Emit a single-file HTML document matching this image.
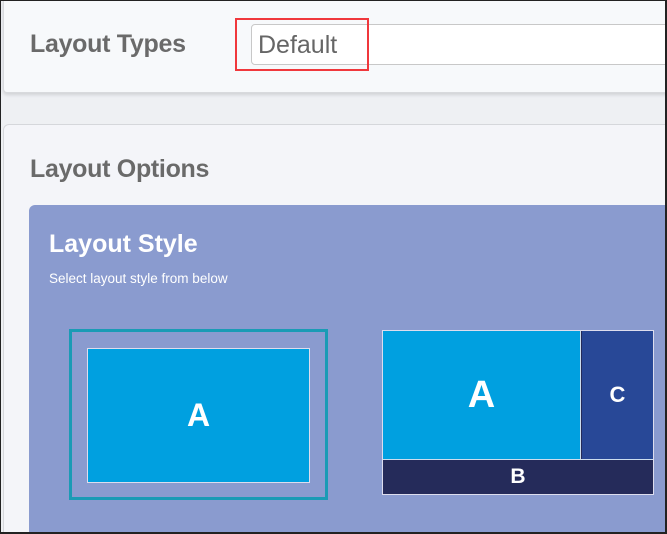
<!DOCTYPE html>
<html><head><style>
*{margin:0;padding:0;box-sizing:border-box}
html,body{width:667px;height:534px;overflow:hidden}
body{background:#eef0f3;font-family:"Liberation Sans",sans-serif;position:relative;}
.abs{position:absolute}
.h{color:#6a6a6a;font-weight:bold;font-size:25px;letter-spacing:-0.3px}
</style></head><body>
<div class="abs" style="left:3px;top:0;width:670px;height:93px;background:#f7f9fb;border:1px solid #d8dadd;border-top:none;border-radius:0 0 4px 4px;box-shadow:0 2px 3px rgba(0,0,0,.12)"></div>
<div class="abs h" style="left:30px;top:30px">Layout Types</div>
<div class="abs" style="left:251px;top:24px;width:420px;height:41px;background:#fff;border:1px solid #c8c8c8;border-radius:4px"></div>
<div class="abs" style="left:258px;top:31px;font-size:25px;color:#666">Default</div>
<div class="abs" style="left:235px;top:18px;width:134px;height:53px;border:2px solid #f0383c"></div>
<div class="abs" style="left:3px;top:124px;width:670px;height:420px;background:#f4f5f9;border:1px solid #d5d7db;border-radius:6px"></div>
<div class="abs h" style="left:30px;top:155px">Layout Options</div>
<div class="abs" style="left:29px;top:205px;width:640px;height:340px;background:#8a9bcf;border-radius:6px 0 0 0"></div>
<div class="abs" style="left:49px;top:230px;color:#fff;font-weight:bold;font-size:25px">Layout Style</div>
<div class="abs" style="left:49px;top:271px;color:#fff;font-size:13.5px">Select layout style from below</div>
<div class="abs" style="left:69px;top:329px;width:259px;height:171px;border:3px solid #1a9bb5"></div>
<div class="abs" style="left:87px;top:348px;width:223px;height:135px;background:#00a0e0;border:1px solid #dde;color:#fff;font-weight:bold;font-size:32px;display:flex;align-items:center;justify-content:center">A</div>
<div class="abs" style="left:382px;top:330px;width:272px;height:165px;border:1px solid #dde;background:#252b5a">
<div class="abs" style="left:0;top:0;width:198px;height:128px;background:#00a0e0;color:#fff;font-weight:bold;font-size:38px;display:flex;align-items:center;justify-content:center;border-right:1px solid #cde">A</div>
<div class="abs" style="left:199px;top:0;width:71px;height:128px;background:#284897;color:#fff;font-weight:bold;font-size:22px;display:flex;align-items:center;justify-content:center">C</div>
<div class="abs" style="left:0;top:128px;width:270px;height:35px;border-top:1px solid #cde;color:#fff;font-weight:bold;font-size:21px;display:flex;align-items:center;justify-content:center">B</div>
</div>
<div class="abs" style="left:0;top:0;width:667px;height:534px;border:1px solid #222;border-right:2px solid #222;border-bottom:2px solid #222;pointer-events:none"></div>
</body></html>
